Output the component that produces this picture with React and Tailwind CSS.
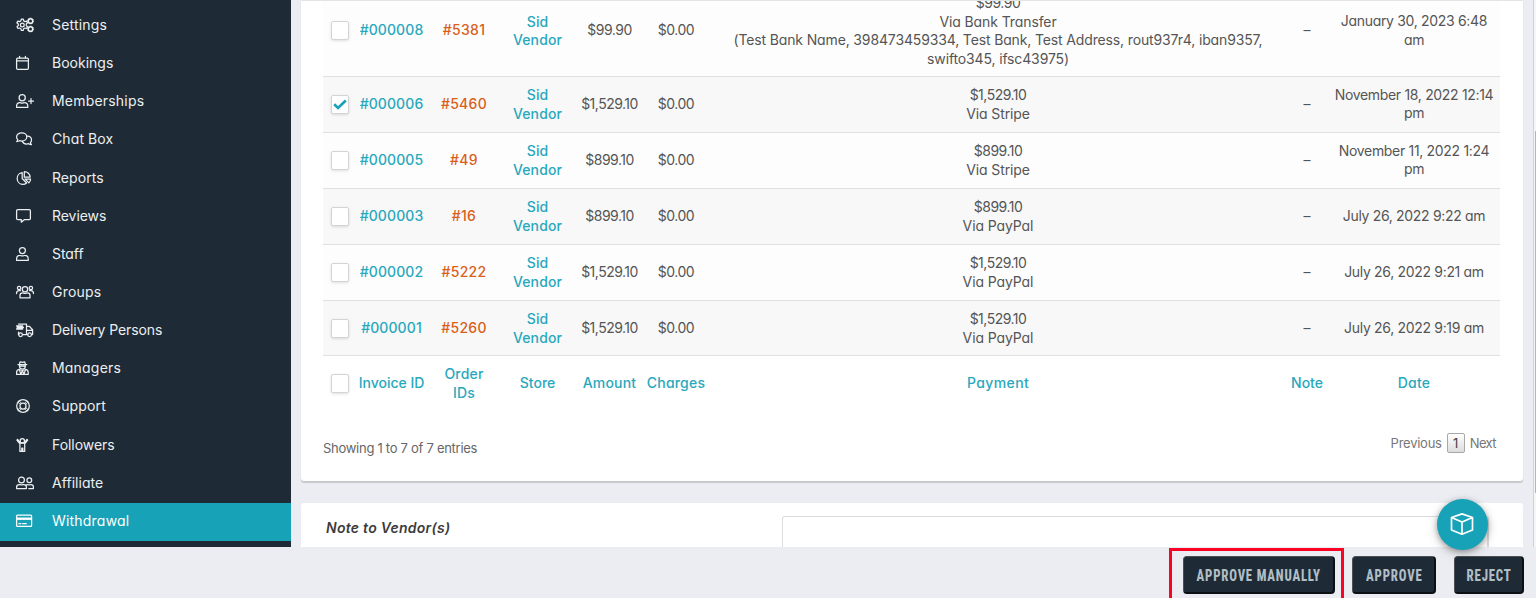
import React, {useState} from 'react';

//SIDEBAR ICONS, all drawn from the same left edge
const Icon = ({children, w = 18}) => (
    <svg width={w} height="14" viewBox={`0 0 ${w} 14`} fill="none" stroke="currentColor" strokeWidth="1.25" strokeLinejoin="round" strokeLinecap="round" className="overflow-visible">
        {children}
    </svg>
);

const icons = {
    settings: (
        <Icon>
            <path d="M5.3 1.2h2l.4 1.7 1.3.7 1.5-.5 1 1.7-1.2 1.2v1.6l1.2 1.1-1 1.8-1.5-.5-1.3.7-.4 1.7h-2l-.4-1.7-1.3-.7-1.6.5-1-1.8 1.3-1.1V6L.8 4.8l1.1-1.7 1.6.5 1.3-.7z" />
            <circle cx="6.3" cy="6.9" r="1.9" />
            <circle cx="14.5" cy="3" r="2.3" strokeWidth="1.6" />
            <circle cx="14.5" cy="3" r="2.9" strokeWidth=".9" strokeDasharray="1.2 1" strokeLinecap="butt" />
            <circle cx="14.5" cy="11" r="2.3" strokeWidth="1.6" />
            <circle cx="14.5" cy="11" r="2.9" strokeWidth=".9" strokeDasharray="1.2 1" strokeLinecap="butt" />
        </Icon>
    ),
    bookings: (
        <Icon>
            <rect x=".6" y="2" width="11.8" height="11.4" rx="1.2" />
            <path d="M.6 4.8h11.8M3.6.4V2M9.4.4V2" />
        </Icon>
    ),
    memberships: (
        <Icon>
            <circle cx="6.2" cy="3.8" r="3.1" />
            <path d="M.6 13.4v-1.5A3.4 3.4 0 0 1 4 8.600c.9 0 1.100.5 2.200.5s1.300-.5 2.200-.5a3.400 3.400 0 0 1 3.400 3.300v1.500zM15 4.500v5M12.500 7h5" />
        </Icon>
    ),
    chat: (
        <Icon>
            <path d="M5.700.8c2.900 0 5.100 1.800 5.100 4.100S8.600 9 5.700 9c-.8 0-1.500-.1-2.200-.4-.7.600-1.600 1-2.800 1 .6-.6 1-1.300 1.100-2C1 6.900.6 6 .6 4.900.6 2.600 2.800.8 5.700.8z" />
            <path d="M11.200 4.200c2.500.1 4.300 1.700 4.300 3.700 0 1-.4 1.900-1.100 2.600.1.800.5 1.500 1.100 2.100-1.200 0-2.100-.3-2.900-.9-2.600.7-5.300-.3-6.300-2.300" />
        </Icon>
    ),
    reports: (
        <Icon>
            <path d="M6.200 1.500A6 6 0 0 0 6.700 13.400c1.500 0 2.800-.4 3.900-1.400L6.200 7.500z" />
            <path d="M8.300.6v5.600h5.800C14.100 3 11.500.6 8.300.6zM9 8h5.600a6 6 0 0 1-1.700 3.900z" />
        </Icon>
    ),
    reviews: (
        <Icon>
            <path d="M1.800.6h11.400q1.200 0 1.200 1.200v7.600q0 1.200-1.200 1.200H8.500l-3.200 2.600v-2.600H1.800q-1.200 0-1.200-1.200V1.800Q.6.6 1.800.6z" />
        </Icon>
    ),
    staff: (
        <Icon>
            <circle cx="6.400" cy="3.600" r="3" />
            <path d="M.6 13.400v-1.600a3.400 3.400 0 0 1 3.400-3.300c.9 0 1.400.5 2.400.5s1.500-.5 2.400-.5a3.400 3.400 0 0 1 3.400 3.300v1.600z" />
        </Icon>
    ),
    groups: (
        <Icon>
            <circle cx="9" cy="4.200" r="2.700" />
            <circle cx="3.100" cy="3" r="1.700" />
            <circle cx="14.900" cy="3" r="1.700" />
            <path d="M4 12.800v-2.300c0-1.500 1.100-2.600 2.600-2.600.8 0 1.300.5 2.400.5s1.600-.5 2.400-.5c1.500 0 2.600 1.100 2.600 2.600v2.300zM.5 8.500c0-2 .8-2.900 2.600-2.900h1.400M17.500 8.500c0-2-.8-2.900-2.600-2.900h-1.400" />
        </Icon>
    ),
    delivery: (
        <Icon>
            <path d="M2.500 1h8v10.600H6.600M2.500 9v2.600M10.500 3.300h2.800l3.300 3.500v4.800h-1M10.500 7.400h6M10.600 11.600h1.200" />
            <path d="M.6 2.900h6M1.300 4.500h6M.6 6.100h6" strokeWidth="1.500" />
            <circle cx="4.600" cy="11.700" r="1.800" />
            <circle cx="13.600" cy="11.700" r="1.800" />
        </Icon>
    ),
    managers: (
        <Icon>
            <path d="M3.300 3.400L4.200.8 6.400 1.300 8.600.8l.9 2.600M2 3.600h8.800M3.500 4v1.200a2.900 2.900 0 0 0 5.800 0V4M3.600 5h5.600" />
            <path d="M.6 13.400v-2c0-1.600 1-2.800 2.600-3.100l1.700 5.100 1.500-4 1.500 4 1.700-5.100c1.600.3 2.600 1.500 2.600 3.100v2zM4.800 9l1.600.5L8 9" />
        </Icon>
    ),
    support: (
        <Icon>
            <circle cx="7" cy="7" r="6.300" />
            <circle cx="7" cy="7" r="3" />
            <path d="M3.200 1.900l2.200 2.400M1.900 3.200l2.400 2.200M10.800 1.900L8.600 4.300M12.100 3.200L9.700 5.400M3.200 12.100l2.200-2.400M1.900 10.800l2.400-2.200M10.800 12.100L8.600 9.700M12.100 10.800L9.700 8.600" strokeWidth=".9" />
        </Icon>
    ),
    followers: (
        <Icon>
            <circle cx="6.300" cy="2.900" r="2.200" />
            <path d="M1.600 1.300L.9 2.200l3 3.600v7.600h1.900V10h1v3.400h1.900V5.800l3-3.600-.7-.9L8.300 4.800h-4z" />
        </Icon>
    ),
    affiliate: (
        <Icon>
            <circle cx="5.500" cy="4" r="2.900" />
            <circle cx="13.300" cy="4.300" r="2.400" />
            <path d="M.6 12.600v-1.400c0-1.500 1.200-2.700 2.700-2.700.8 0 1.200.4 2.200.4s1.400-.4 2.200-.4c1.500 0 2.700 1.200 2.700 2.700v1.400zM10.400 8.900c.5-.2.900-.3 1.300-.3.600 0 .9.300 1.600.3s1-.3 1.700-.3c1.400 0 2.400 1.100 2.400 2.500v1.500h-4.600" />
        </Icon>
    ),
    withdrawal: (
        <Icon>
            <rect x=".6" y="1.100" width="15" height="11.300" rx="1" />
            <path d="M.6 4.700h15" strokeWidth="2.400" strokeLinecap="butt" />
            <path d="M3 9.700h1.800M6.600 9.700h3.600" />
        </Icon>
    ),
};

const menu = [
    {key: 'settings', label: 'Settings', tracking: 'tracking-[0.2px]'},
    {key: 'bookings', label: 'Bookings', tracking: 'tracking-[0px]'},
    {key: 'memberships', label: 'Memberships', tracking: 'tracking-[0.2px]'},
    {key: 'chat', label: 'Chat Box', tracking: 'tracking-[0.1px]'},
    {key: 'reports', label: 'Reports', tracking: 'tracking-[0.05px]'},
    {key: 'reviews', label: 'Reviews', tracking: 'tracking-[-0.05px]'},
    {key: 'staff', label: 'Staff', tracking: 'tracking-[-0.05px]'},
    {key: 'groups', label: 'Groups', tracking: 'tracking-[0.2px]'},
    {key: 'delivery', label: 'Delivery Persons', tracking: 'tracking-[-0.1px]'},
    {key: 'managers', label: 'Managers', tracking: 'tracking-[0.2px]'},
    {key: 'support', label: 'Support', tracking: 'tracking-[0.15px]'},
    {key: 'followers', label: 'Followers', tracking: 'tracking-[-0.05px]'},
    {key: 'affiliate', label: 'Affiliate', tracking: 'tracking-[0.05px]'},
    {key: 'withdrawal', label: 'Withdrawal', tracking: 'tracking-[0.2px]'},
];

const rows = [
    {id: '#000008', order: '#5381', amount: '$99.90', via: 'Via Bank Transfer', date: 'January 30, 2023 6:48 am',
        details: '(Test Bank Name, 398473459334, Test Bank, Test Address, rout937r4, iban9357, swifto345, ifsc43975)'},
    {id: '#000006', order: '#5460', amount: '$1,529.10', via: 'Via Stripe', date: 'November 18, 2022 12:14 pm'},
    {id: '#000005', order: '#49', amount: '$899.10', via: 'Via Stripe', date: 'November 11, 2022 1:24 pm'},
    {id: '#000003', order: '#16', amount: '$899.10', via: 'Via PayPal', date: 'July 26, 2022 9:22 am'},
    {id: '#000002', order: '#5222', amount: '$1,529.10', via: 'Via PayPal', date: 'July 26, 2022 9:21 am'},
    {id: '#000001', order: '#5260', amount: '$1,529.10', via: 'Via PayPal', date: 'July 26, 2022 9:19 am'},
];

const gridCols = 'grid grid-cols-[34px_69px_76px_71px_73px_60px_584px_34px_176px] items-center text-center';

const Checkbox = ({checked, onClick}) => (
    <button onClick={onClick} className="w-[18px] h-[19px] ml-2 rounded-[2px] border border-[#d4d4d4] bg-white shadow-[0_1px_3px_rgba(0,0,0,0.12)] flex items-center justify-center">
        {checked && (
            <svg width="14" height="11" viewBox="0 0 14 11" fill="none" stroke="#17a2b8" strokeWidth="2.6">
                <path d="M1.200 5.300L5 8.900 12.800 1.500" />
            </svg>
        )}
    </button>
);

const ActionButton = ({label, width}) => (
    <button className={`${width} h-[38px] rounded-[4px] bg-[#1e2b36] text-[#b0bec5] border-t border-l border-b-2 border-r-2 border-t-[#4a5054] border-l-[#4a5054] border-b-[#0c1013] border-r-[#0c1013] flex items-center justify-center pt-[3px] pl-px`}>
        <span className="font-['Roboto_Condensed'] font-extrabold text-[16px] leading-none tracking-[1px] whitespace-nowrap scale-x-[0.8]">{label}</span>
    </button>
);

const App = () => {
    const [active, setActive] = useState('withdrawal');
    const [selected, setSelected] = useState(['#000006']);

    const toggle = (id) => {
        setSelected(selected.includes(id) ? selected.filter((s) => s !== id) : [...selected, id]);
    };

    return (
        <div className="relative w-[1536px] h-[598px] overflow-hidden bg-[#ecedf2] flex flex-col font-[Inter,sans-serif] [font-feature-settings:'cv11'] text-[14px]">
            <div className="flex h-[547px] overflow-hidden">
                {/*SIDEBAR*/}
                <nav className="w-[291px] shrink-0 bg-[#1e2b36] pt-[6.6px]">
                    {menu.map((item) => (
                        <a
                            key={item.key}
                            onClick={() => setActive(item.key)}
                            className={`flex items-center h-[38.17px] pl-4 pb-[2.6px] cursor-pointer ${active === item.key ? 'bg-[#17a2b8] text-white' : 'text-[#eceff1]'}`}>
                            <span className="w-9 flex pt-[1px]">{icons[item.key]}</span>
                            <span className={item.tracking}>{item.label}</span>
                        </a>
                    ))}
                </nav>

                {/*CONTENT*/}
                <main className="flex-1 pl-[10px]">
                    <section className="w-[1222px] h-[481px] overflow-hidden bg-white rounded-b-[3px] shadow-[0_2px_1px_#c6c8c8] pl-[22px] border-t border-[#e4e4e4]">
                        <div className="-mt-[17px] w-[1177px] text-[#555] leading-[18.5px]">
                            {rows.map((row, i) => (
                                <div
                                    key={row.id}
                                    className={`${gridCols} border-b border-[#e0e0e0] ${i === 0 ? 'h-[93px] pt-[1px]' : 'h-[55.9px]'} ${i % 2 ? 'bg-[#f8f8f8]' : 'bg-[#fdfdfd]'}`}>
                                    <Checkbox checked={selected.includes(row.id)} onClick={() => toggle(row.id)} />
                                    <span className="text-[#28a8bd] font-medium tracking-[0.1px]">{row.id}</span>
                                    <span className="text-[#d9601a] font-medium tracking-[0.3px]">{row.order}</span>
                                    <span className="text-[#28a8bd] font-medium tracking-[0.1px] pt-[1px]">Sid<br />Vendor</span>
                                    <span className="tracking-[-0.5px]">{row.amount}</span>
                                    <span className="tracking-[-0.5px]">$0.00</span>
                                    <span className="px-5 pt-[1px]">
                                        <span className="tracking-[-0.5px]">{row.amount}</span><br />
                                        <span className="tracking-[-0.1px]">{row.via}</span>
                                        {row.details && <><br /><span className="tracking-[-0.14px]">{row.details}</span></>}
                                    </span>
                                    <span>–</span>
                                    <span className="pl-[10px] pr-[6px] tracking-[-0.32px]">{row.date}</span>
                                </div>
                            ))}

                            {/*TABLE FOOTER*/}
                            <div className={`${gridCols} h-[55px] text-[#28a8bd] font-medium tracking-[0.2px]`}>
                                <Checkbox />
                                <span className="tracking-[0px] pb-px">Invoice ID</span>
                                <span className="px-3">Order IDs</span>
                                <span className="tracking-[0px] pb-px">Store</span>
                                <span className="pb-px">Amount</span>
                                <span className="pb-px">Charges</span>
                                <span className="tracking-[0.4px] pb-px">Payment</span>
                                <span className="tracking-[0px] pb-px">Note</span>
                                <span className="pl-1 pb-px">Date</span>
                            </div>
                        </div>

                        <div className="w-[1177px] mt-[22px] flex justify-between text-[13px] text-[#666]">
                            <span className="mt-[6px] tracking-[-0.28px]">Showing 1 to 7 of 7 entries</span>
                            <div className="flex items-center h-5 pr-1 text-[#777]">
                                <span className="tracking-[-0.25px]">Previous</span>
                                <span className="w-[18px] h-5 mx-[5px] border border-[#a8a8a8] rounded-[2px] bg-linear-to-b from-white to-[#dcdcdc] text-[#444] leading-[18px] text-center">1</span>
                                <span className="tracking-[-0.6px]">Next</span>
                            </div>
                        </div>
                    </section>

                    {/*VENDOR NOTE*/}
                    <section className="w-[1222px] h-[60px] mt-[22px] bg-white rounded-t-[3px] flex">
                        <span className="w-[481px] pl-[25px] pt-[14px] font-semibold italic text-[#3c3c3c] tracking-[0.28px]">Note to Vendor(s)</span>
                        <div className="w-[707px] mt-[13px] border-2 border-t border-l border-[#dcdcdc] rounded-[3px]" />
                    </section>
                </main>

                {/*SCROLLBAR*/}
                <div className="w-[3px] bg-[#f6f6f6] border-l border-[#d2d2d4] flex justify-end">
                    <div className="w-px h-[362px] mt-[131px] bg-[#b4b4b4]" />
                </div>
            </div>

            {/*ACTIONS*/}
            <div className="flex h-[51px] justify-end items-start pr-3">
                <div className="w-[175px] h-[60px] mt-[1px] mr-[8px] border-[3px] border-[#fb0324] pl-[11px] pt-[5px]">
                    <ActionButton label="APPROVE MANUALLY" width="w-[152px]" />
                </div>
                <div className="flex gap-[18px] pt-[9px]">
                    <ActionButton label="APPROVE" width="w-[84px]" />
                    <ActionButton label="REJECT" width="w-[70px]" />
                </div>
            </div>

            {/*FLOATING BUTTON*/}
            <button className="absolute left-[1437px] top-[499px] w-[51px] h-[51px] rounded-full bg-[#17a2b8] shadow-[0_2px_6px_rgba(0,0,0,0.35),0_4px_14px_rgba(0,0,0,0.12)] flex items-center justify-center pr-[1px] pb-[1px]">
                <svg width="24" height="22" viewBox="0 0 24 22" fill="none" stroke="#fff" strokeWidth="1.700" strokeLinejoin="round">
                    <path d="M12 .9L22.500 4.500V17L12 21.200 1.500 17V4.500zM1.500 4.500L12 9l10.500-4.500M12 9v12" />
                </svg>
            </button>
        </div>
    );
};

export default App;
